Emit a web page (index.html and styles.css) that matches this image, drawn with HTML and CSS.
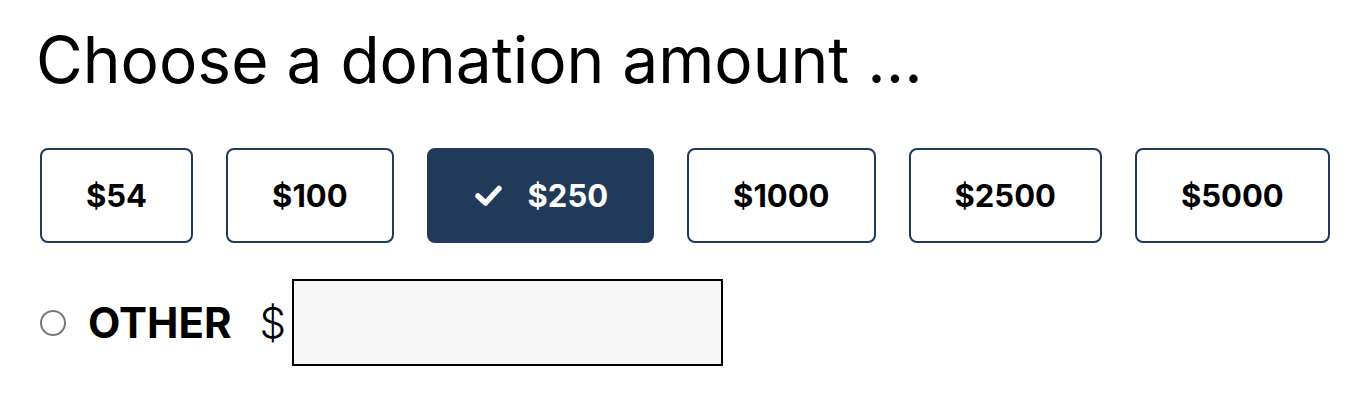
FILE: index.html
```html
<!DOCTYPE html>
<html lang="en">

<head>
    <meta charset="UTF-8">
    <meta name="viewport" content="width=device-width, initial-scale=1.0">
    <title>Donate</title>
    <link rel="stylesheet" href="styles.css">
</head>

<body>
    <div class="donate">
        <h1 class="title">Choose a donation amount ...</h1>

        <!-- Preset amounts -->
        <div class="amounts">
            <button class="amount">$54</button>
            <button class="amount">$100</button>
            <button class="amount selected">
                <svg class="check" viewBox="0 0 27 21" width="27" height="21">
                    <path d="M3 11 L10.5 18 L24 3.5" fill="none" stroke="#fff" stroke-width="5.5" stroke-linecap="round" stroke-linejoin="round"/>
                </svg>
                $250
            </button>
            <button class="amount">$1000</button>
            <button class="amount">$2500</button>
            <button class="amount">$5000</button>
        </div>

        <!-- Custom amount -->
        <div class="other-row">
            <input type="radio" class="other-radio" name="amount" id="other">
            <label for="other" class="other-label">OTHER</label>
            <span class="currency">$</span>
            <input type="text" class="other-input">
        </div>
    </div>
</body>

</html>
```

FILE: styles.css
```css
/* Basic Reset */
* {
    margin: 0;
    padding: 0;
    box-sizing: border-box;
}

body {
    font-family: Inter, "DejaVu Sans", sans-serif;
    background-color: #fff;
    color: #000;
}

.donate {
    padding: 22px 0 0 36px;
}

.title {
    font-size: 64px;
    font-weight: 400;
    line-height: 76px;
}

/* Preset amount buttons */
.amounts {
    display: flex;
    gap: 33px;
    margin-top: 50px;
    padding-left: 4px;
}

.amount {
    height: 95px;
    padding: 0 44px;
    border: 2px solid #1f3a5a;
    border-radius: 8px;
    background: #fff;
    color: #000;
    font-family: inherit;
    font-size: 31px;
    font-weight: 700;
    display: flex;
    align-items: center;
    gap: 26px;
    cursor: pointer;
}

.amount.selected {
    background: #213a5a;
    border-color: #213a5a;
    color: #fff;
    padding-left: 46px;
}

/* Other amount row */
.other-row {
    display: flex;
    align-items: center;
    margin-top: 36px;
    padding-left: 4px;
}

.other-radio {
    appearance: none;
    width: 26px;
    height: 26px;
    border: 2px solid #777;
    border-radius: 50%;
    background: #fff;
}

.other-label {
    font-size: 42px;
    font-weight: 700;
    margin-left: 22px;
}

.currency {
    font-size: 42px;
    font-weight: 300;
    margin-left: 28px;
    margin-right: 6px;
}

.other-input {
    width: 431px;
    height: 87px;
    border: 2px solid #000;
    background: #f7f7f7;
}
```
